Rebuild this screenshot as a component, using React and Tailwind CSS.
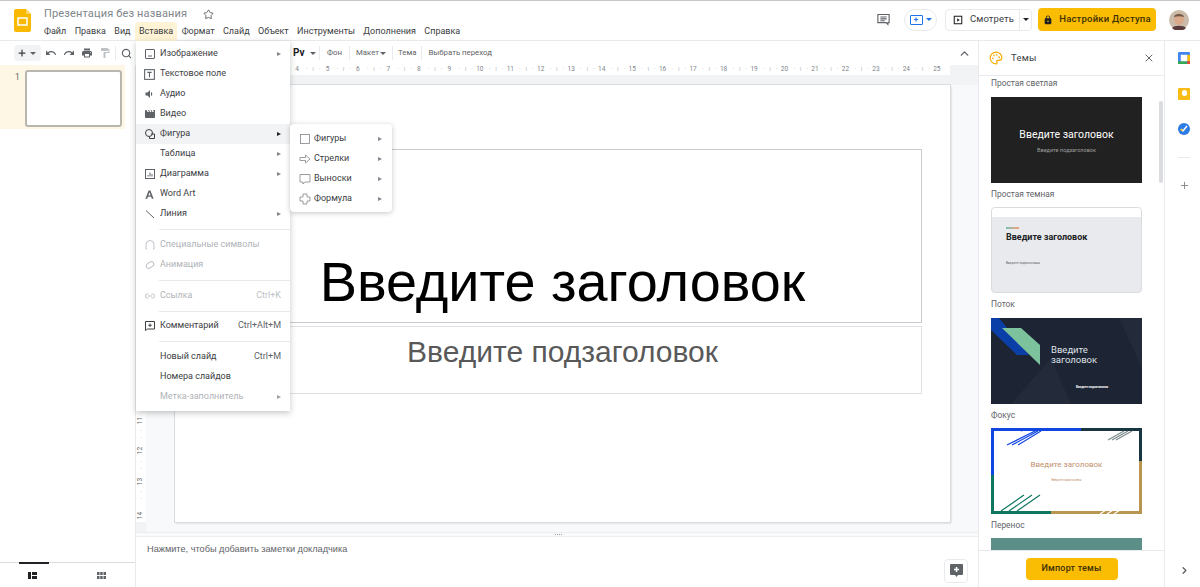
import React from "react";
import { Star, X, Plus, ChevronUp, ChevronRight, Search, Palette } from "lucide-react";

const Mi = ({ d, size = 14, color = "#5f6368" }) => (
  <svg width={size} height={size} viewBox="0 0 24 24" fill={color} className="shrink-0">
    <path d={d} />
  </svg>
);

const Line = ({ size = 14, color = "#5f6368", children }) => (
  <svg width={size} height={size} viewBox="0 0 24 24" fill="none" stroke={color} strokeWidth="2" className="shrink-0">
    {children}
  </svg>
);

const UNDO = "M12.5 8c-2.65 0-5.05.99-6.9 2.6L2 7v9h9l-3.62-3.62c1.39-1.16 3.16-1.88 5.12-1.88 3.54 0 6.55 2.31 7.6 5.5l2.37-.78C21.08 11.03 17.15 8 12.5 8z";
const REDO = "M18.4 10.6C16.55 8.99 14.15 8 11.5 8c-4.65 0-8.58 3.03-9.96 7.22L3.9 16c1.05-3.19 4.05-5.5 7.6-5.5 1.95 0 3.73.72 5.12 1.88L13 16h9V7l-3.6 3.6z";
const PRINT = "M19 8H5c-1.66 0-3 1.34-3 3v6h4v4h12v-4h4v-6c0-1.66-1.34-3-3-3zm-3 11H8v-5h8v5zm3-7c-.55 0-1-.45-1-1s.45-1 1-1 1 .45 1 1-.45 1-1 1zm-1-9H6v4h12V3z";
const PAINT = "M18 4V3c0-.55-.45-1-1-1H5c-.55 0-1 .45-1 1v4c0 .55.45 1 1 1h12c.55 0 1-.45 1-1V6h1v4H9v11c0 .55.45 1 1 1h2c.55 0 1-.45 1-1v-9h8V4h-3z";
const VOLUME = "M3 9v6h4l5 5V4L7 9H3zm13.5 3c0-1.77-1.02-3.29-2.5-4.03v8.05c1.48-.73 2.5-2.25 2.5-4.02z";
const MOVIE = "M18 4l2 4h-3l-2-4h-2l2 4h-3l-2-4H8l2 4H7L5 4H4c-1.1 0-2 .9-2 2v12c0 1.1.9 2 2 2h16c1.1 0 2-.9 2-2V4h-4z";
const LOCK = "M18 8h-1V6c0-2.76-2.24-5-5-5S7 3.24 7 6v2H6c-1.1 0-2 .9-2 2v10c0 1.1.9 2 2 2h12c1.1 0 2-.9 2-2V10c0-1.1-.9-2-2-2zm-6 9c-1.1 0-2-.9-2-2s.9-2 2-2 2 .9 2 2-.9 2-2 2zm3.1-9H8.9V6c0-1.71 1.39-3.1 3.1-3.1 1.71 0 3.1 1.39 3.1 3.1v2z";

const menuItems = ["Файл", "Правка", "Вид", "Вставка", "Формат", "Слайд", "Объект", "Инструменты", "Дополнения", "Справка"];

const Caret = ({ color = "#5f6368" }) => (
  <span className="inline-block h-0 w-0 shrink-0 border-x-[3px] border-t-[3px] border-x-transparent" style={{ borderTopColor: color }} />
);

const Arrow = ({ color = "#80868b" }) => (
  <span className="inline-block h-0 w-0 border-y-[2.5px] border-l-[4px] border-y-transparent" style={{ borderLeftColor: color }} />
);

function MenuRow({ icon, label, hint, arrow, disabled, active }) {
  return (
    <div className={`flex h-5 items-center pr-[9px] text-[9px] ${active ? "bg-[#f1f3f4]" : ""} ${disabled ? "text-[#b0b3b7]" : "text-[#3c4043]"}`}>
      <span className="flex w-6 justify-center pl-[3px]">{icon}</span>
      <span className="flex-1">{label}</span>
      {hint && <span className={disabled ? "text-[#bdc1c6]" : "text-[#5f6368]"}>{hint}</span>}
      {arrow && <Arrow color={active ? "#202124" : disabled ? "#9aa0a6" : "#80868b"} />}
    </div>
  );
}

const Sep = ({ h = "h-[11px]" }) => (
  <div className={`flex ${h} items-center pl-[23px]`}>
    <div className="h-px w-full bg-[#e8eaed]" />
  </div>
);

function InsertMenu() {
  return (
    <div className="absolute left-[136px] top-[41px] z-20 h-[370px] w-[154px] bg-white pt-[3px] shadow-[0_2px_6px_rgba(60,64,67,0.3)]">
      <MenuRow label="Изображение" arrow icon={<Line size={12}><rect x="3" y="3" width="18" height="18" rx="1" /><path d="M8 16h8" /></Line>} />
      <MenuRow label="Текстовое поле" icon={<Line size={13}><rect x="3" y="3" width="18" height="18" /><path d="M8 8h8M12 8v9" /></Line>} />
      <MenuRow label="Аудио" icon={<Mi d={VOLUME} size={12} />} />
      <MenuRow label="Видео" icon={<Mi d={MOVIE} size={12} />} />
      <MenuRow active label="Фигура" arrow icon={<Line size={12} color="#3c4043"><circle cx="10" cy="10" r="7" /><path d="M14 12h7v9h-10v-4" /></Line>} />
      <MenuRow label="Таблица" arrow />
      <MenuRow label="Диаграмма" arrow icon={<Line size={12}><rect x="3" y="3" width="18" height="18" /><path d="M8 17v-3M12 17V9M16 17v-5" /></Line>} />
      <MenuRow label="Word Art" icon={<Mi d="M10 3h4l7 18h-4l-1.4-4H8.4L7 21H3zM9.600 14h4.800L12 7z" size={11} />} />
      <MenuRow label="Линия" arrow icon={<Line size={12}><path d="M4 5l16 15" /></Line>} />
      <Sep />
      <MenuRow disabled label="Специальные символы" icon={<Line size={12} color="#bdc1c6"><path d="M6 20H4v-9a8 8 0 0 1 16 0v9h-2" /></Line>} />
      <MenuRow disabled label="Анимация" icon={<Line size={12} color="#bdc1c6"><rect x="4" y="7" width="16" height="10" rx="5" transform="rotate(-35 12 12)" /></Line>} />
      <Sep />
      <MenuRow disabled label="Ссылка" hint="Ctrl+K" icon={<Line size={12} color="#bdc1c6"><path d="M9 8H7a4 4 0 0 0 0 8h2M15 8h2a4 4 0 0 1 0 8h-2M8 12h8" /></Line>} />
      <Sep h="h-[10px]" />
      <MenuRow label="Комментарий" hint="Ctrl+Alt+M" icon={<Line size={12} color="#3c4043"><path d="M3 3h18v15H7l-4 3zM12 7v7M8.500 10.500h7" /></Line>} />
      <Sep />
      <MenuRow label="Новый слайд" hint="Ctrl+M" />
      <MenuRow label="Номера слайдов" />
      <MenuRow disabled label="Метка-заполнитель" arrow />
    </div>
  );
}

function SubRow({ icon, label }) {
  return (
    <div className="flex h-5 items-center pl-[9px] pr-[10px] text-[9px] text-[#3c4043]">
      <span className="flex w-[15px] justify-start">{icon}</span>
      <span className="flex-1">{label}</span>
      <Arrow />
    </div>
  );
}

function ShapeMenu() {
  return (
    <div className="absolute left-[290px] top-[124px] z-30 h-[88px] w-[102px] rounded-sm bg-white pt-[5px] shadow-[0_1px_5px_rgba(60,64,67,0.3)]">
      <SubRow label="Фигуры" icon={<Line size={12} color="#80868b"><rect x="3" y="3" width="18" height="18" strokeWidth="1.600" /></Line>} />
      <SubRow label="Стрелки" icon={<Line size={12} color="#80868b"><path d="M2 9h11V4l9 8-9 8v-5H2z" strokeWidth="1.600" /></Line>} />
      <SubRow label="Выноски" icon={<Line size={12} color="#80868b"><path d="M2 3h20v15H12l-4 4v-4H2z" strokeWidth="1.600" /></Line>} />
      <SubRow label="Формула" icon={<Line size={12} color="#80868b"><path d="M8 2h8v6h6v8h-6v6H8v-6H2V8h6z" strokeWidth="1.600" /></Line>} />
    </div>
  );
}

function TopBar() {
  return (
    <header className="flex h-[41px] shrink-0 border-t border-b border-t-[#c8c8c8] border-b-[#e8eaed] bg-white">
      <div className="flex w-[44px] justify-center pt-2">
        <svg width="17" height="23" viewBox="0 0 17 23">
          <path d="M2 0h10l5 5v16a2 2 0 0 1-2 2H2a2 2 0 0 1-2-2V2a2 2 0 0 1 2-2z" fill="#f9b900" />
          <path d="M12 0l5 5h-5z" fill="#fdd663" />
          <rect x="4" y="9" width="9" height="7" fill="none" stroke="#fff" strokeWidth="1.500" />
        </svg>
      </div>
      <div className="flex-1">
        <div className="flex h-[21px] items-center pt-1.5 text-[11px] tracking-[0.15px] text-[#80868b]">
          <span>Презентация без названия</span>
          <Star size={11} className="ml-4 text-[#5f6368]" />
        </div>
        <nav className="-ml-[4.2px] flex h-[19px] items-center text-[9px] text-[#3c4043]">
          {menuItems.map((m) => (
            <span key={m} className={`flex h-[19px] items-center rounded-t-sm px-[4.2px] ${m === "Вставка" ? "bg-[#fef3d4]" : ""}`}>{m}</span>
          ))}
        </nav>
      </div>
      <div className="flex items-center pb-[2px] pr-[12px]">
        <Line size={15}><path d="M3 4h18v13h-2v3l-3-3H3zM7 8h10M7 11h10M7 14h7" strokeWidth="1.800" /></Line>
        <div className="ml-[13px] flex h-[22px] w-[33px] items-center justify-center gap-[3px] rounded-full border border-[#e8eaed]">
          <span className="flex h-[10px] w-[13px] items-center justify-center rounded-[1px] border-[1.5px] border-[#1a73e8] text-[8px] font-bold leading-none text-[#1a73e8]">+</span>
          <Caret color="#1a73e8" />
        </div>
        <div className="ml-[8px] flex h-[22px] w-[87px] items-center rounded-sm border border-[#e8eaed] text-[#3c4043]">
          <span className="flex flex-1 items-center gap-[7px] pl-[7px] text-[9.500px] tracking-[0.1px]">
            <Line size={10} color="#202124"><rect x="3" y="3" width="18" height="18" strokeWidth="2.500" /><path d="M10 8l6 4-6 4z" fill="#202124" stroke="none" /></Line>
            Смотреть
          </span>
          <span className="flex h-full w-3 items-center justify-center border-l border-[#e8eaed]">
            <Caret color="#202124" />
          </span>
        </div>
        <div className="ml-[6px] flex h-[23px] w-[118px] items-center justify-center gap-[6px] rounded-sm bg-[#fbbc04] text-[9.500px] font-medium tracking-[0.2px] text-[#3c2f00]">
          <Mi d={LOCK} size={10} color="#202124" />
          Настройки Доступа
        </div>
        <svg width="20" height="20" viewBox="0 0 20 20" className="ml-[13px] mr-[-1px]">
          <circle cx="10" cy="10" r="10" fill="#cabbaa" />
          <ellipse cx="10" cy="9" rx="5" ry="6" fill="#d9a98a" />
          <path d="M5 7c0-4 10-4 10 0-3-1-7-1-10 0z" fill="#6b5b4a" />
          <path d="M3 18c2-3 12-3 14 0a10 10 0 0 1-14 0z" fill="#5a3a3a" />
        </svg>
      </div>
    </header>
  );
}

function ToolBar() {
  return (
    <div className="flex h-[24px] shrink-0 items-center bg-white pl-[14px] pr-[7px] text-[7.800px] text-[#5f6368]">
      <div className="flex h-4 w-[27px] items-center gap-[3px] rounded-sm bg-[#f1f3f4] pl-[3px]">
        <Plus size={10} strokeWidth={3} className="text-[#3c4043]" />
        <Caret />
      </div>
      <span className="ml-[4px] flex items-center gap-[6px]">
        <Mi d={UNDO} size={12} />
        <Mi d={REDO} size={12} />
        <Mi d={PRINT} size={12} />
        <Mi d={PAINT} size={12} color="#bdc1c6" />
      </span>
      <span className="ml-[4px] h-3.5 w-px bg-[#e8eaed]" />
      <Search size={11} strokeWidth={2.5} className="ml-[5px]" />
      {/* the open menu covers everything between here and the font button */}
      <span className="ml-[161px] flex w-[24px] items-center gap-[5px] text-[10px] font-bold leading-none text-[#202124]">
        Pv
        <Caret />
      </span>
      <span className="ml-[2px] h-3.5 w-px bg-[#e8eaed]" />
      <span className="px-[7px]">Фон</span>
      <span className="h-3.5 w-px bg-[#e8eaed]" />
      <span className="flex items-center gap-[1px] px-[6px]">Макет <Caret /></span>
      <span className="h-3.5 w-px bg-[#e8eaed]" />
      <span className="px-[5px]">Тема</span>
      <span className="h-3.5 w-px bg-[#e8eaed]" />
      <span className="px-[6px]">Выбрать переход</span>
      <ChevronUp size={13} strokeWidth={2.5} className="ml-auto" />
    </div>
  );
}

function HRuler() {
  const nums = Array.from({ length: 22 }, (_, i) => i + 4);
  return (
    <div className="flex h-[10px] shrink-0 overflow-hidden bg-[#f1f3f4]">
      <div className="flex w-[814px] shrink-0 overflow-hidden bg-white">
        <div className="w-[157px] shrink-0" />
        {nums.map((n) => (
          <div key={n} className="flex w-[30.480px] shrink-0 items-center justify-between pr-[3px] text-[6.500px] text-[#bdc1c6]">
            <span className="w-2 text-center text-[#80868b]">{n}</span>
            {n < 25 && <span>·</span>}
            {n < 25 && <span>ı</span>}
            {n < 25 && <span>·</span>}
          </div>
        ))}
      </div>
    </div>
  );
}

function VRuler() {
  return (
    <div className="flex w-[10px] shrink-0 flex-col overflow-hidden bg-[#f1f3f4]">
      <div className="h-[437px] shrink-0 overflow-hidden bg-white pt-[320px]">
        {[11, 12, 13, 14].map((n) => (
          <div key={n} className="flex h-[30.480px] flex-col items-center justify-between text-[6.500px] leading-[7px] text-[#bdc1c6]">
            <span>·</span>
            <span className="-rotate-90 text-[#5f6368]">{n}</span>
            <span>{n < 14 ? "·" : ""}</span>
          </div>
        ))}
      </div>
    </div>
  );
}

function Slide() {
  return (
    <div className="h-[437px] w-[775px] shrink-0 bg-white px-[28px] pt-[64px] shadow-[0_0_0_1px_#dadce0,1px_1px_2px_#c4c7c5] [font-family:'Liberation_Sans',Arial,sans-serif]">
      <div className="flex h-[174px] items-end justify-center border border-[#c9cbce] pb-[6px] text-[55.800px] leading-[1.2] text-black">
        Введите заголовок
      </div>
      <div className="mt-[3px] flex h-[68px] items-center justify-center border border-[#dfe1e5] pb-[18px] text-[30px] text-[#595959]">
        Введите подзаголовок
      </div>
    </div>
  );
}

function ThemeCard({ children, className = "" }) {
  return <div className={`relative h-[86px] w-[151px] shrink-0 overflow-hidden ${className}`}>{children}</div>;
}

const ThemeName = ({ children, h = "h-[24px]" }) => (
  <div className={`flex ${h} shrink-0 items-center pb-[2px] text-[8.400px] text-[#5f6368]`}>{children}</div>
);

function ThemesPanel() {
  return (
    <aside className="relative flex h-full w-[187px] shrink-0 flex-col border-x border-[#e8eaed] bg-white [font-family:Roboto,sans-serif]">
      <div className="flex h-[35px] shrink-0 items-center border-b border-[#e8eaed] pl-[10px] pr-[9px]">
        <Palette size={14} className="text-[#f9ab00]" />
        <span className="ml-[8px] flex-1 text-[9.500px] tracking-[0.2px] text-[#3c4043]">Темы</span>
        <X size={12} className="text-[#5f6368]" />
      </div>
      <div className="flex flex-1 flex-col overflow-hidden pl-[12px]">
        <div className="flex h-[14px] shrink-0 items-start text-[8.400px] leading-[14px] text-[#5f6368]">Простая светлая</div>
        <div className="mt-[7px]" />
        <ThemeCard className="flex flex-col items-center justify-center bg-[#212121] pt-[3px] text-white">
          <div className="text-[10.500px] leading-[14px]">Введите заголовок</div>
          <div className="mt-1 text-[5.500px] text-[#9e9e9e]">Введите подзаголовок</div>
        </ThemeCard>
        <ThemeName>Простая темная</ThemeName>
        <ThemeCard className="rounded-sm border border-[#dadce0] bg-[#e8eaed] pl-[14px] pt-[11px]">
          <div className="absolute inset-x-0 top-0 h-[9px] bg-white" />
          <div className="relative mt-[8px] h-[2px] w-[13px] bg-gradient-to-r from-[#6fc1b5] to-[#f29c7a]" />
          <div className="relative mt-[1px] text-[9px] font-bold leading-[14px] text-[#202124]">Введите заголовок</div>
          <div className="relative mt-[17px] text-[3.200px] text-[#5f6368]">Введите подзаголовок</div>
        </ThemeCard>
        <ThemeName h="h-[25px]">Поток</ThemeName>
        <ThemeCard className="bg-[#1d2433] pl-[60px] pt-[27px] text-[#dfe1e5]">
          <svg viewBox="0 0 151 86" className="absolute inset-0 h-full w-full">
            <path d="M128 0h23v50zM20 86L60 40l20 46z" fill="#232a39" />
            <path d="M0 0h8l30 37H26L0 12z" fill="#0b3fa8" />
            <path d="M11 10h19l19 17v20z" fill="#7cc39d" />
          </svg>
          <div className="relative text-[9.500px] leading-[10px]">Введите<br />заголовок</div>
          <div className="relative ml-[25px] mt-[20px] text-[3px] font-bold text-white">Введите подзаголовок</div>
        </ThemeCard>
        <ThemeName>Фокус</ThemeName>
        <ThemeCard className="flex flex-col items-center justify-center bg-white">
          <svg viewBox="0 0 151 86" className="absolute inset-0 h-full w-full">
            <path d="M0 0h90v3H3v44H0z" fill="#1246e0" />
            <path d="M90 0h61v33h-3V3H90z" fill="#173642" />
            <path d="M148 33h3v53H60v-3h88z" fill="#b8964f" />
            <path d="M0 47h3v36h57v3H0z" fill="#0e7661" />
            <path d="M16 17L46 2M21 17L47 3M27 17L50 3M30 3L38 0" stroke="#1246e0" strokeWidth="1.200" />
            <path d="M117 12L133 3M121 12L137 3M125 12L141 3" stroke="#7d8a8c" strokeWidth="1.200" />
            <path d="M10 83L33 67M18 83L41 67M26 83L49 67" stroke="#0e7661" strokeWidth="1.200" />
            <path d="M109 86L115 82M116 86L122 82M123 86L129 82" stroke="#fff" strokeWidth="1.200" />
          </svg>
          <div className="relative text-[8px] leading-[12px] text-[#c2906d]">Введите заголовок</div>
          <div className="relative mt-[7px] text-[2.800px] text-[#c2906d]">Введите подзаголовок</div>
        </ThemeCard>
        <ThemeName>Перенос</ThemeName>
        <ThemeCard className="bg-[#5b8f87]" />
      </div>
      <div className="absolute right-[1px] top-[60px] h-[82px] w-[4px] rounded-full bg-[#dadce0]" />
      <div className="absolute inset-x-0 bottom-0 z-10 flex h-[37px] items-center justify-center border-t border-[#e8eaed] bg-white pb-[1px]">
        <div className="flex h-[22px] w-[92px] items-center justify-center rounded-sm bg-[#fbbc04] text-[9px] font-medium tracking-[0.2px] text-[#3c2f00]">Импорт темы</div>
      </div>
    </aside>
  );
}

function SideStrip() {
  return (
    <aside className="flex w-[35px] shrink-0 flex-col items-center bg-white pl-[3px] pt-[11px] text-[#80868b]">
      <svg width="12" height="12" viewBox="0 0 13 13" className="shrink-0">
        <rect width="13" height="13" rx="1" fill="#4285f4" />
        <rect x="10" y="3" width="3" height="7" fill="#fbbc04" />
        <rect y="10" width="10" height="3" fill="#34a853" />
        <rect x="10" y="10" width="3" height="3" fill="#ea4335" />
        <rect x="3" y="3" width="7" height="7" fill="#fff" />
      </svg>
      <span className="mt-[24px] flex h-3 w-3 items-start justify-center rounded-[1px] bg-[#f9bc15] pt-[2px]">
        <span className="h-[6px] w-[5px] rounded-full bg-white" />
      </span>
      <span className="mt-[23px] flex h-3 w-3 items-center justify-center rounded-full bg-[#2d7be5]">
        <svg width="8" height="8" viewBox="0 0 8 8"><path d="M1 4l2 2 4-5" fill="none" stroke="#fff" strokeWidth="1.500" /><circle cx="1.500" cy="5" r="1" fill="#fbbc04" /></svg>
      </span>
      <span className="mt-[22px] h-px w-3 bg-[#e8eaed]" />
      <Plus size={11} className="mt-[22px]" />
      <ChevronRight size={11} strokeWidth={3} className="mb-[11px] mt-auto text-[#5f6368]" />
    </aside>
  );
}

function FilmStrip() {
  return (
    <aside className="flex w-[136px] shrink-0 flex-col border-r border-[#e8eaed] bg-white">
      <div className="flex h-[64px] w-[125px] items-start bg-[#fef7e6] pt-[5px]">
        <span className="w-[25px] pl-[15px] pt-[1px] text-[8.500px] leading-3 text-[#5f6368]">1</span>
        <div className="h-[57px] w-[97px] rounded-[3px] border-2 border-[#b7b7b0] bg-white" />
      </div>
      <div className="mt-auto flex h-[25px] shrink-0 items-center border-t border-[#dadce0]">
        <div className="relative flex h-full w-[64px] items-center justify-center">
          <span className="absolute left-[19px] top-[-1px] h-[2px] w-[30px] bg-[#202124]" />
          <svg width="9" height="7" viewBox="0 0 9 7" fill="#202124"><rect width="3" height="7" /><rect x="4" width="5" height="3" /><rect x="4" y="4" width="5" height="3" /></svg>
        </div>
        <div className="flex h-full w-[71px] items-center justify-center pl-[3px]">
          <svg width="9" height="7" viewBox="0 0 9 7" fill="#5f6368"><rect width="2.500" height="3" /><rect x="3.200" width="2.500" height="3" /><rect x="6.500" width="2.500" height="3" /><rect y="4" width="2.500" height="3" /><rect x="3.200" y="4" width="2.500" height="3" /><rect x="6.500" y="4" width="2.500" height="3" /></svg>
        </div>
      </div>
    </aside>
  );
}

export default function App() {
  return (
    <div className="relative flex h-[587px] w-[1200px] flex-col overflow-hidden bg-white [font-family:Roboto,sans-serif]">
      <TopBar />
      <InsertMenu />
      <ShapeMenu />
      <div className="flex min-h-0 flex-1">
        <div className="flex min-w-0 flex-1 flex-col">
          <ToolBar />
          <div className="flex min-h-0 flex-1">
            <FilmStrip />
            <div className="flex min-w-0 flex-1 flex-col">
              <HRuler />
              <div className="h-[10px] shrink-0 bg-[#f1f3f4]" />
              <div className="flex h-[447px] shrink-0 bg-[#f8f9fa]">
                <VRuler />
                <div className="pl-[29px]"><Slide /></div>
              </div>
              <div className="flex h-[5px] shrink-0 items-center justify-center gap-[1px] border-y border-[#eceff1] bg-[#fafafa] pl-[2px]">
                {[0, 1, 2, 3].map((i) => (
                  <span key={i} className="h-px w-px bg-[#9aa0a6]" />
                ))}
              </div>
              <div className="relative flex-1 bg-white pl-[11px] pt-[6px] text-[9.200px] leading-3 text-[#5f6368] [font-family:'Liberation_Sans',Arial,sans-serif]">
                Нажмите, чтобы добавить заметки докладчика
                <span className="absolute bottom-[4px] right-[10px] flex h-[24px] w-[24px] items-center justify-center rounded-sm border border-[#e8eaed]">
                  <svg width="13" height="14" viewBox="0 0 13 14"><path d="M1 0h11a1 1 0 0 1 1 1v9a1 1 0 0 1-1 1H8l-1.500 2L5 11H1a1 1 0 0 1-1-1V1a1 1 0 0 1 1-1z" fill="#5f6368" /><path d="M6.500 3v5M4 5.500h5" stroke="#fff" strokeWidth="1.500" /></svg>
                </span>
              </div>
            </div>
          </div>
        </div>
        <ThemesPanel />
        <SideStrip />
      </div>
    </div>
  );
}
